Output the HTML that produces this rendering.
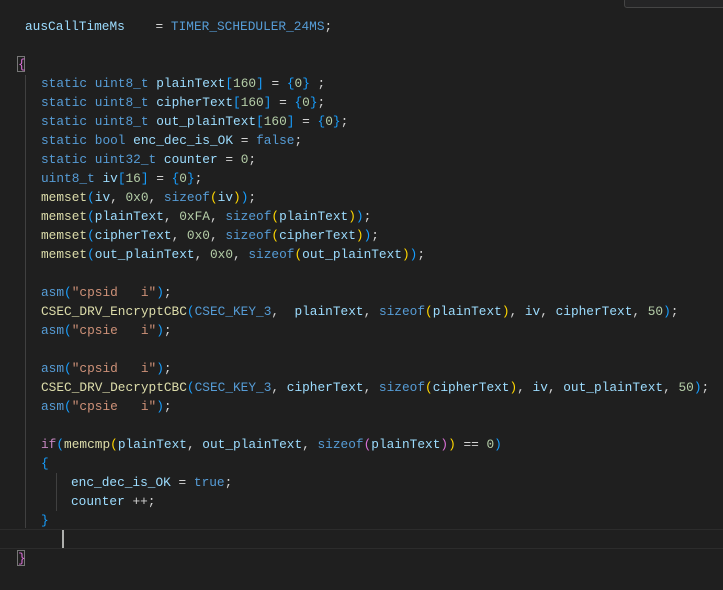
<!DOCTYPE html>
<html><head><meta charset="utf-8"><style>
html,body{margin:0;padding:0;background:#1f1f1f;width:723px;height:590px;overflow:hidden;position:relative}
.l{position:absolute;left:0;height:19px;line-height:19px;white-space:pre;font-family:"Liberation Mono",monospace;font-size:12.8px;color:#d4d4d4}
.k{color:#569cd6}.v{color:#9cdcfe}.n{color:#b5cea8}.f{color:#dcdcaa}.s{color:#ce9178}.p{color:#c586c0}
.g{color:#ffd700}.o{color:#da70d6}.b{color:#179fff}
</style></head><body>
<div style="position:absolute;left:624px;top:-2px;width:110px;height:8px;border:1px solid #454545;border-radius:3px;background:#252526"></div>
<div style="position:absolute;left:0;top:529px;width:723px;height:18px;border-top:1px solid #2c2c2c;border-bottom:1px solid #2c2c2c"></div>
<div style="position:absolute;left:25px;top:75px;width:1px;height:453px;background:#404040"></div>
<div style="position:absolute;left:56px;top:473px;width:1px;height:38px;background:#404040"></div>
<div style="position:absolute;left:62px;top:530px;width:2px;height:18px;background:#aeafad"></div>
<div style="position:absolute;left:17px;top:56px;width:8px;height:16px;border:1px solid #777;box-sizing:border-box"></div>
<div style="position:absolute;left:17px;top:550px;width:8px;height:16px;border:1px solid #777;box-sizing:border-box"></div>

<div class="l" style="top:17px;left:25px"><span class="v">ausCallTimeMs</span>    = <span class="k">TIMER_SCHEDULER_24MS</span>;</div>
<div class="l" style="top:55px;left:18px"><span class="o">{</span></div>
<div class="l" style="top:74px;left:41px"><span class="k">static</span> <span class="k">uint8_t</span> <span class="v">plainText</span><span class="b">[</span><span class="n">160</span><span class="b">]</span> = <span class="b">{</span><span class="n">0</span><span class="b">}</span> ;</div>
<div class="l" style="top:93px;left:41px"><span class="k">static</span> <span class="k">uint8_t</span> <span class="v">cipherText</span><span class="b">[</span><span class="n">160</span><span class="b">]</span> = <span class="b">{</span><span class="n">0</span><span class="b">}</span>;</div>
<div class="l" style="top:112px;left:41px"><span class="k">static</span> <span class="k">uint8_t</span> <span class="v">out_plainText</span><span class="b">[</span><span class="n">160</span><span class="b">]</span> = <span class="b">{</span><span class="n">0</span><span class="b">}</span>;</div>
<div class="l" style="top:131px;left:41px"><span class="k">static</span> <span class="k">bool</span> <span class="v">enc_dec_is_OK</span> = <span class="k">false</span>;</div>
<div class="l" style="top:150px;left:41px"><span class="k">static</span> <span class="k">uint32_t</span> <span class="v">counter</span> = <span class="n">0</span>;</div>
<div class="l" style="top:169px;left:41px"><span class="k">uint8_t</span> <span class="v">iv</span><span class="b">[</span><span class="n">16</span><span class="b">]</span> = <span class="b">{</span><span class="n">0</span><span class="b">}</span>;</div>
<div class="l" style="top:188px;left:41px"><span class="f">memset</span><span class="b">(</span><span class="v">iv</span>, <span class="n">0x0</span>, <span class="k">sizeof</span><span class="g">(</span><span class="v">iv</span><span class="g">)</span><span class="b">)</span>;</div>
<div class="l" style="top:207px;left:41px"><span class="f">memset</span><span class="b">(</span><span class="v">plainText</span>, <span class="n">0xFA</span>, <span class="k">sizeof</span><span class="g">(</span><span class="v">plainText</span><span class="g">)</span><span class="b">)</span>;</div>
<div class="l" style="top:226px;left:41px"><span class="f">memset</span><span class="b">(</span><span class="v">cipherText</span>, <span class="n">0x0</span>, <span class="k">sizeof</span><span class="g">(</span><span class="v">cipherText</span><span class="g">)</span><span class="b">)</span>;</div>
<div class="l" style="top:245px;left:41px"><span class="f">memset</span><span class="b">(</span><span class="v">out_plainText</span>, <span class="n">0x0</span>, <span class="k">sizeof</span><span class="g">(</span><span class="v">out_plainText</span><span class="g">)</span><span class="b">)</span>;</div>
<div class="l" style="top:283px;left:41px"><span class="k">asm</span><span class="b">(</span><span class="s">"cpsid   i"</span><span class="b">)</span>;</div>
<div class="l" style="top:302px;left:41px"><span class="f">CSEC_DRV_EncryptCBC</span><span class="b">(</span><span class="k">CSEC_KEY_3</span>,  <span class="v">plainText</span>, <span class="k">sizeof</span><span class="g">(</span><span class="v">plainText</span><span class="g">)</span>, <span class="v">iv</span>, <span class="v">cipherText</span>, <span class="n">50</span><span class="b">)</span>;</div>
<div class="l" style="top:321px;left:41px"><span class="k">asm</span><span class="b">(</span><span class="s">"cpsie   i"</span><span class="b">)</span>;</div>
<div class="l" style="top:359px;left:41px"><span class="k">asm</span><span class="b">(</span><span class="s">"cpsid   i"</span><span class="b">)</span>;</div>
<div class="l" style="top:378px;left:41px"><span class="f">CSEC_DRV_DecryptCBC</span><span class="b">(</span><span class="k">CSEC_KEY_3</span>, <span class="v">cipherText</span>, <span class="k">sizeof</span><span class="g">(</span><span class="v">cipherText</span><span class="g">)</span>, <span class="v">iv</span>, <span class="v">out_plainText</span>, <span class="n">50</span><span class="b">)</span>;</div>
<div class="l" style="top:397px;left:41px"><span class="k">asm</span><span class="b">(</span><span class="s">"cpsie   i"</span><span class="b">)</span>;</div>
<div class="l" style="top:435px;left:41px"><span class="p">if</span><span class="b">(</span><span class="f">memcmp</span><span class="g">(</span><span class="v">plainText</span>, <span class="v">out_plainText</span>, <span class="k">sizeof</span><span class="o">(</span><span class="v">plainText</span><span class="o">)</span><span class="g">)</span> == <span class="n">0</span><span class="b">)</span></div>
<div class="l" style="top:454px;left:41px"><span class="b">{</span></div>
<div class="l" style="top:473px;left:71px"><span class="v">enc_dec_is_OK</span> = <span class="k">true</span>;</div>
<div class="l" style="top:492px;left:71px"><span class="v">counter</span> ++;</div>
<div class="l" style="top:511px;left:41px"><span class="b">}</span></div>
<div class="l" style="top:549px;left:18px"><span class="o">}</span></div>
</body></html>
